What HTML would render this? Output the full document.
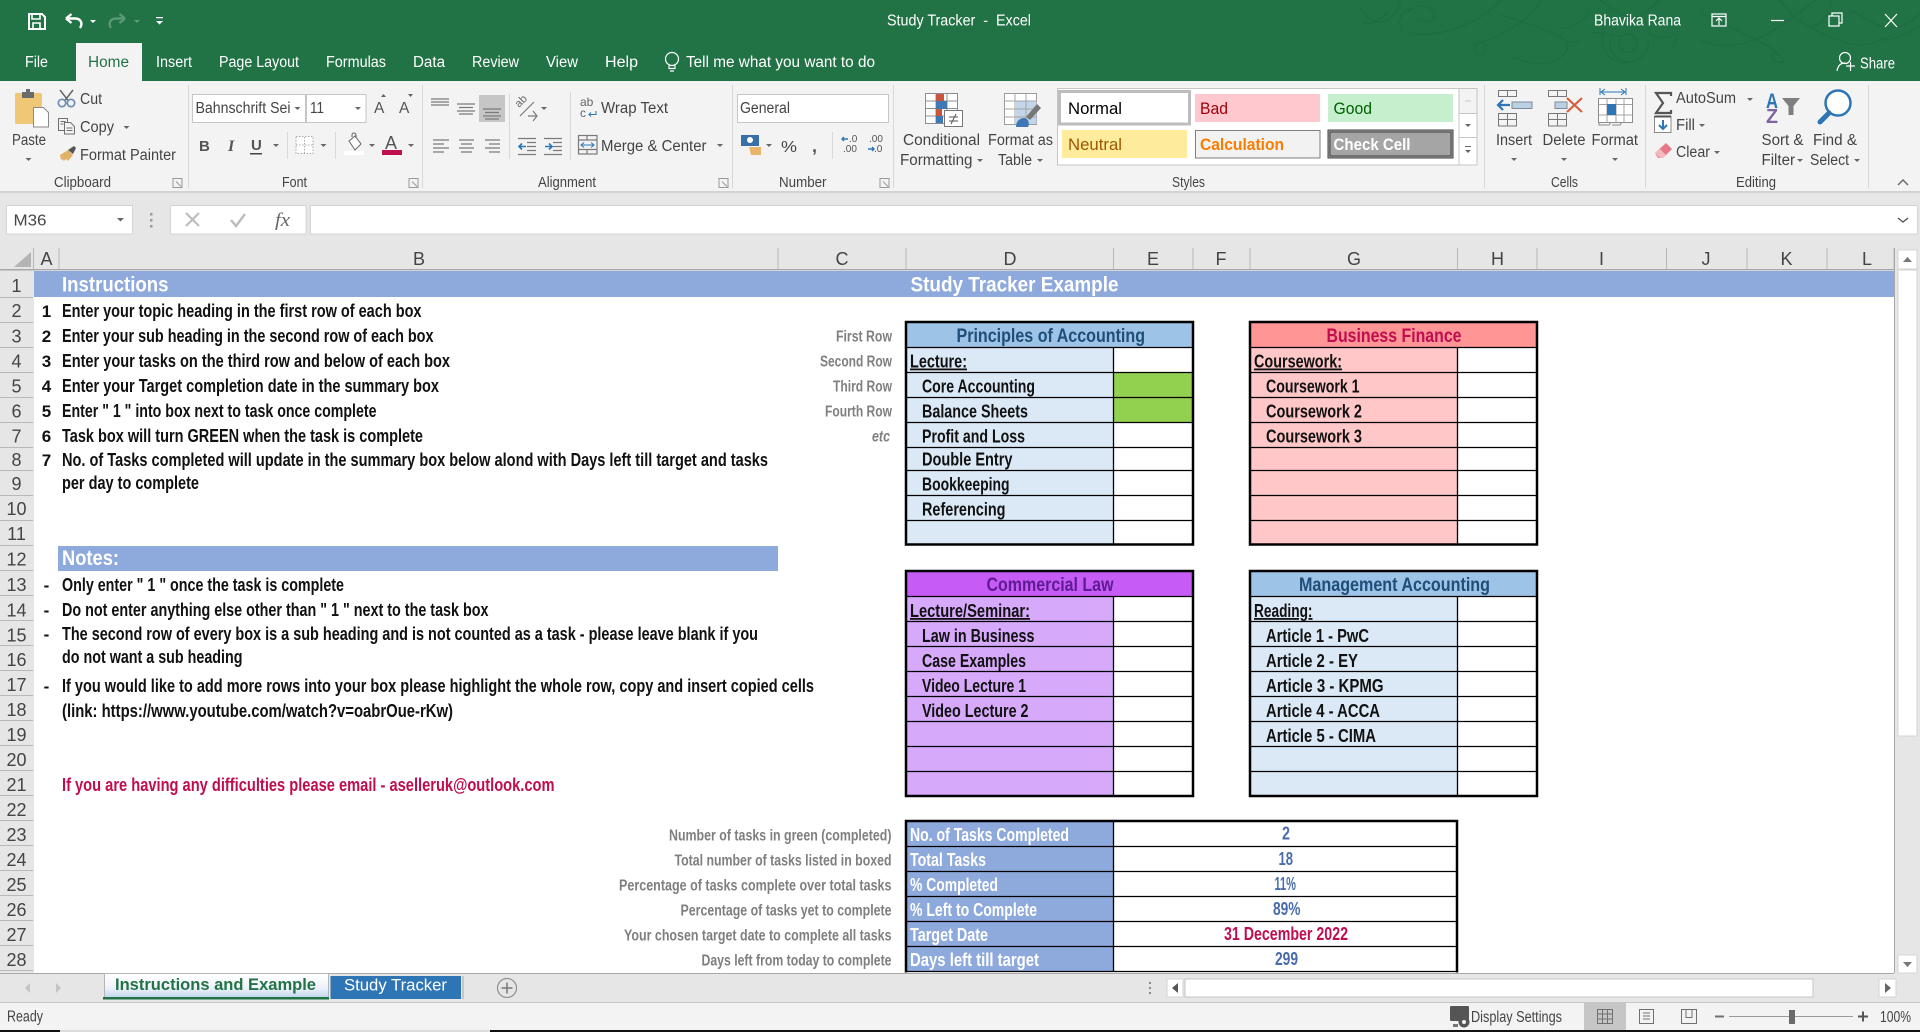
<!DOCTYPE html>
<html lang="en"><head><meta charset="utf-8"><title>Study Tracker - Excel</title>
<style>
html,body{margin:0;padding:0;width:1920px;height:1032px;overflow:hidden;background:#e6e6e6}
svg{display:block;position:absolute;left:0;top:0}
text{white-space:pre}
.u{font-family:"Liberation Sans",Arial,sans-serif;font-size:15.5px;fill:#444}
.w{fill:#fff}
.g{font-size:14.5px;fill:#444}
.h{font-family:"Liberation Sans Narrow","Liberation Sans",sans-serif;font-size:18px;fill:#444}
.s{font-family:"Liberation Sans Narrow","Liberation Sans",sans-serif;font-weight:700;font-size:18px;fill:#111}
.l{fill:#7f7f7f;font-size:16px}
.v{fill:#4a6cab;text-anchor:start}
.r{fill:#c00d50}
.o{fill:#fff}
.t{font-size:19px}
.b{fill:#1f4e79}
.p{fill:#5f1b94}
</style></head><body>
<svg width="1920" height="1032" viewBox="0 0 1920 1032">
<!-- base -->
<rect width="1920" height="1032" fill="#e6e6e6"/>
<rect width="1920" height="81" fill="#217346"/>
<g fill="none" stroke="#1e6c42" stroke-width="1.300">
<path d="M1360 8c8 12 22 20 32 8s8-12 8-16M1362 22c10 4 18-2 26-10M1410 33c28 6 66-8 92-33M1414 8c-12 2-18 12-12 22M1408 12c12-10 24-6 26 2s-10 10-16 4M1470 45c24-4 56-22 72-45M1482 40c8 10 2 16-4 14s-4-8 2-14M1500 15c30 8 60 20 66 26s-4 20-20 22-26-4-32-6M1590 10c-6 12-18 18-28 18M1580 42c-10-2-14 0-16 4"/>
<circle cx="1628" cy="43" r="9"/><path d="M1612 36c-6 14 4 26 17 26s21-12 19-22M1604 30c-6 22 8 34 24 33M1648 33c10 6 18 6 24 2s6 8 0 12M1620 36c-14 0-20-6-30-2"/>
<path d="M1700 40c22 10 50 6 80-14s30-22 36-26M1700 12c24 14 60 26 76 40s0 12-4 6 4-8 8-2M1780 0c10 16 30 30 58 40s34 2 52-4M1810 28c10-4 18-10 22-28M1850 10c14 6 28 18 40 18s20-6 30-14M1880 40c12 0 24-4 40-14M1600 0c10 8 20 16 34 18M1660 0c-8 8-16 14-26 18"/>
</g>
<!-- QAT -->
<g fill="none" stroke="#fff" stroke-width="2">
<path d="M29 14h13l3 3v12H29z"/><path d="M32 14v5h8v-5M33 29v-6h7v6" stroke-width="1.600"/>
<path d="M66 18.500l5.500-4.500M66 18.500l5.500 4.500M66 18.500h9c6 0 8 5 5 9.500" stroke-width="2.400"/>
<path d="M125 18.500l-5.500-4.500M125 18.500l-5.500 4.500M125 18.500h-9c-6 0-8 5-5 9.500" stroke="#5c9a78" stroke-width="2.200"/>
</g>
<g fill="#fff"><path d="M90 20h6l-3 3z"/><path d="M134 20h6l-3 3z" fill="#5c9a78"/><path d="M156 17h7v1.200h-7zM156 21h7l-3.500 3.500z"/></g>
<text class="u w" x="887" y="25.500" font-size="15" textLength="144" lengthAdjust="spacingAndGlyphs">Study Tracker  -  Excel</text>
<text class="u w" x="1594" y="25.500" textLength="87" lengthAdjust="spacingAndGlyphs">Bhavika Rana</text>
<g fill="none" stroke="#fff" stroke-width="1.200">
<rect x="1712" y="14" width="14" height="12"/><path d="M1712 16.500h14M1719 25v-7M1716 21l3-3 3 3"/>
<path d="M1771 20.500h13"/>
<rect x="1829" y="16" width="10" height="10"/><path d="M1832 16v-3h10v10h-3"/>
<path d="M1885 14l12 13M1897 14l-12 13"/>
<circle cx="1845" cy="58" r="5.500"/><path d="M1837 71c1-6 4-8 8-8M1846 66h9M1850.500 62v9"/>
<circle cx="672" cy="59" r="6.500"/><path d="M669 65.500v3h6v-3M670 71h4"/>
</g>
<text class="u w" x="1860" y="68.500" textLength="35" lengthAdjust="spacingAndGlyphs">Share</text>
<!-- tabs -->
<rect x="76" y="43" width="66" height="40" fill="#f3f3f3"/>
<g class="u w">
<text class="u w" x="25" y="67" textLength="23" lengthAdjust="spacingAndGlyphs">File</text>
<text class="u" x="88" y="67" style="fill:#217346" textLength="41" lengthAdjust="spacingAndGlyphs">Home</text>
<text class="u w" x="156" y="67" textLength="36" lengthAdjust="spacingAndGlyphs">Insert</text>
<text class="u w" x="219" y="67" textLength="80" lengthAdjust="spacingAndGlyphs">Page Layout</text>
<text class="u w" x="326" y="67" textLength="60" lengthAdjust="spacingAndGlyphs">Formulas</text>
<text class="u w" x="413" y="67" textLength="32" lengthAdjust="spacingAndGlyphs">Data</text>
<text class="u w" x="472" y="67" textLength="47" lengthAdjust="spacingAndGlyphs">Review</text>
<text class="u w" x="546" y="67" textLength="32" lengthAdjust="spacingAndGlyphs">View</text>
<text class="u w" x="605" y="67" textLength="33" lengthAdjust="spacingAndGlyphs">Help</text>
<text class="u w" x="686" y="67" textLength="189" lengthAdjust="spacingAndGlyphs">Tell me what you want to do</text>
</g>
<!-- ribbon -->
<rect y="81" width="1920" height="111" fill="#f3f3f3"/>
<rect x="76" y="81" width="66" height="2" fill="#f3f3f3"/>
<rect y="191" width="1920" height="2" fill="#d2d2d2"/>
<g fill="#d8d8d8"><rect x="188" y="85" width="1" height="103"/><rect x="422" y="85" width="1" height="103"/><rect x="732" y="85" width="1" height="103"/><rect x="893" y="85" width="1" height="103"/><rect x="1484" y="85" width="1" height="103"/><rect x="1645" y="85" width="1" height="103"/><rect x="1868" y="85" width="1" height="103"/><rect x="287" y="132" width="1" height="27"/><rect x="335" y="132" width="1" height="27"/><rect x="509" y="94" width="1" height="65"/><rect x="570" y="92" width="1" height="68"/><rect x="832" y="132" width="1" height="27"/></g>
<!-- clipboard -->
<rect x="15" y="93" width="27" height="31" rx="1.500" fill="#f0c677"/><rect x="22" y="92" width="12" height="6" fill="#6b6b6b"/><rect x="26" y="89" width="4" height="4" fill="#6b6b6b"/>
<path d="M33.500 107.500h10l5 5v14.500h-15z" fill="#fff" stroke="#8a8a8a"/>
<text class="u" x="12" y="145" textLength="34" lengthAdjust="spacingAndGlyphs">Paste</text>
<path d="M25.500 158h6l-3 3z" fill="#666"/>
<g fill="none" stroke="#666" stroke-width="1.500"><path d="M60 90l8.500 11M73 90l-8.500 11"/></g>
<circle cx="62" cy="103" r="3.700" fill="none" stroke="#6b8fb5" stroke-width="1.700"/><circle cx="71" cy="103" r="3.700" fill="none" stroke="#6b8fb5" stroke-width="1.700"/>
<text class="u" x="80" y="104" textLength="22" lengthAdjust="spacingAndGlyphs">Cut</text>
<g fill="#f3f3f3" stroke="#6f6f6f"><path d="M58.500 118.500h9v12h-9z"/><path d="M64.500 122.500h6l4 4v7.500h-10z"/></g><path d="M60.500 121.500h5M60.500 124h3M66.500 128h6M66.500 130.500h6" stroke="#6f6f6f"/>
<text class="u" x="80" y="132" textLength="34" lengthAdjust="spacingAndGlyphs">Copy</text><path d="M123.500 126h6l-3 3z" fill="#666"/>
<path d="M60 155l8-5 5 5-5 6-2-2-2 2-2-2-1 1z" fill="#e2b268"/><path d="M68 150l6-4 2 2-3 6z" fill="#555"/>
<text class="u" x="80" y="160" textLength="96" lengthAdjust="spacingAndGlyphs">Format Painter</text>
<text class="u g" x="54" y="187" textLength="57" lengthAdjust="spacingAndGlyphs">Clipboard</text>
<g fill="none" stroke="#999"><path d="M173 178.500h9v9h-9zM176 181.500l5 5"/><path d="M409 178.500h9v9h-9zM412 181.500l5 5"/><path d="M719 178.500h9v9h-9zM722 181.500l5 5"/><path d="M880 178.500h9v9h-9zM883 181.500l5 5"/></g>
<!-- font -->
<rect x="192.500" y="94.500" width="113" height="28" fill="#fff" stroke="#c6c6c6"/><rect x="306.500" y="94.500" width="59.500" height="28" fill="#fff" stroke="#c6c6c6"/>
<text class="u" x="195.500" y="113" textLength="95" lengthAdjust="spacingAndGlyphs">Bahnschrift Sei</text><text class="u" x="310" y="113" textLength="14" lengthAdjust="spacingAndGlyphs">11</text>
<g fill="#666"><path d="M294.500 107h6l-3 3z"/><path d="M355 107h6l-3 3z"/><path d="M273 144h6l-3 3z"/><path d="M320.500 144h6l-3 3z"/><path d="M369 144h6l-3 3z"/><path d="M408 144h6l-3 3z"/><path d="M541 107h6l-3 3z"/><path d="M766 144h6l-3 3z"/><path d="M878 107h6l-3 3z"/><path d="M1037 159h6l-3 3z"/><path d="M977 159h6l-3 3z"/><path d="M717 144h6l-3 3z"/><path d="M1511 158h6l-3 3z"/><path d="M1561 158h6l-3 3z"/><path d="M1612 158h6l-3 3z"/><path d="M1747 98h6l-3 3z"/><path d="M1699 124h6l-3 3z"/><path d="M1714 151h6l-3 3z"/><path d="M1797 159h6l-3 3z"/><path d="M1854 159h6l-3 3z"/></g>
<text class="u" x="374" y="113" font-size="17" style="fill:#555">A</text><path d="M381 97l2.500-3 2.500 3z" fill="#666"/>
<text class="u" x="399" y="113" font-size="17" style="fill:#555">A</text><path d="M408 94l2.500 3 2.500-3z" fill="#666"/>
<text x="199" y="151" font-family="Liberation Sans" font-weight="700" font-size="15" fill="#555">B</text>
<text x="228" y="151" font-family="Liberation Serif" font-style="italic" font-weight="700" font-size="16" fill="#555">I</text>
<text x="251" y="150" font-family="Liberation Sans" font-weight="700" font-size="15" fill="#555">U</text><rect x="250" y="153" width="12" height="1.500" fill="#444"/>
<rect x="296" y="136.500" width="17" height="17" fill="#fff" stroke="#aaa" stroke-dasharray="1.500 1.500"/><path d="M304.500 137v16M296 145h17" stroke="#aaa" stroke-dasharray="1.500 1.500"/>
<path d="M349 141l6-5 6 8-6 6z" fill="#fff" stroke="#666"/><path d="M352 137l0-2a2 2 0 0 1 4 0l0 3" fill="none" stroke="#666"/><rect x="344" y="151" width="20" height="4" fill="#fff"/>
<text x="385" y="149" font-family="Liberation Sans" font-size="18" fill="#555">A</text><rect x="382" y="150" width="20" height="5" fill="#c00d50"/>
<text class="u g" x="282" y="187" textLength="25" lengthAdjust="spacingAndGlyphs">Font</text>
<!-- alignment -->
<rect x="479" y="95" width="26" height="27" fill="#c6c6c6"/>
<g stroke="#7a7a7a" stroke-width="1.200" fill="none">
<path d="M431 99h18M431 102h18M431 105h18" />
<path d="M457 104h18M459 107.500h14M457 111h18M459 114h14"/>
<path d="M483 109h18M485 112.500h14M483 116h18M485 119h14"/>
<path d="M433 140h16M433 144h11M433 148h16M433 152h11"/>
<path d="M459 140h15M461 144h11M459 148h15M461 152h11"/>
<path d="M485 140h15M489 144h11M485 148h15M489 152h11"/>
<path d="M520 116l14-14M528 116h9M533 111l4 5-4 5" />
<path d="M518 138.500h18M527 142.500h9M527 146.500h9M527 150.500h9M518 154.500h18"/><path d="M544 138.500h18M553 142.500h9M553 146.500h9M553 150.500h9M544 154.500h18"/>
<rect x="578.500" y="135.500" width="18.500" height="18.500"/><path d="M578.500 140h18.500M578.500 149.500h18.500M587 135.500v4M587 150v4"/>
</g>
<text x="519" y="108" font-family="Liberation Sans" font-size="11" fill="#666" transform="rotate(-45 519 108)">ab</text>
<path d="M526 146.500h-7m3-3l-3 3 3 3" stroke="#2e75b6" stroke-width="1.600" fill="none"/><path d="M545 146.500h7m-3-3l3 3-3 3" stroke="#2e75b6" stroke-width="1.600" fill="none"/>
<path d="M581 145h13m-10-2.500l-3 2.500 3 2.500m7-5l3 2.500-3 2.500" stroke="#2e75b6" fill="none"/>
<text x="580" y="106" font-family="Liberation Sans" font-size="12" fill="#666">ab</text><text x="580" y="117" font-family="Liberation Sans" font-size="12" fill="#666">c</text><path d="M596 111v3.500h-7m2-2l-2 2 2 2" stroke="#2e75b6" fill="none"/>
<text class="u" x="601" y="113" textLength="67" lengthAdjust="spacingAndGlyphs">Wrap Text</text>
<text class="u" x="601" y="151" textLength="105.500" lengthAdjust="spacingAndGlyphs">Merge &amp; Center</text>
<text class="u g" x="538" y="187" textLength="58" lengthAdjust="spacingAndGlyphs">Alignment</text>
<!-- number -->
<rect x="737.500" y="94.500" width="151" height="28" fill="#fff" stroke="#c6c6c6"/>
<text class="u" x="740" y="113" textLength="50" lengthAdjust="spacingAndGlyphs">General</text>
<rect x="741" y="135" width="18" height="11" fill="#3a6ea8"/><circle cx="750" cy="140" r="3" fill="#fff"/><path d="M749 147h12v8h-10z" fill="#e9b56a"/>
<text class="u" x="781" y="152" font-size="18" textLength="16" lengthAdjust="spacingAndGlyphs">%</text>
<text x="812" y="152" font-family="Liberation Sans" font-weight="700" font-size="18" fill="#555">,</text>
<g font-family="Liberation Sans" font-size="10" fill="#555"><text x="849" y="142">.0</text><text x="843" y="152">.00</text><text x="869" y="142">.00</text><text x="874" y="152">.0</text></g>
<path d="M848 139h-6m2-2l-2 2 2 2M868 149h6m-2-2l2 2-2 2" stroke="#2e75b6" stroke-width="1.400" fill="none"/>
<text class="u g" x="779" y="187" textLength="47.500" lengthAdjust="spacingAndGlyphs">Number</text>
<!-- cond fmt -->
<g fill="#fff" stroke="#8c8c8c"><rect x="925.500" y="93.500" width="32" height="30"/></g>
<path d="M936 93.500v30M947 93.500v30M925.500 101h32M925.500 108.500h32M925.500 116h32" stroke="#8c8c8c" fill="none"/>
<rect x="936" y="94" width="8" height="7" fill="#c8553d"/><rect x="936" y="101" width="11" height="8" fill="#3f78b5"/><rect x="936" y="109" width="6" height="7" fill="#c8553d"/><rect x="936" y="116" width="7" height="7" fill="#3f78b5"/>
<rect x="944.500" y="110.500" width="18" height="16" fill="#fff" stroke="#777"/><path d="M949 117h9M949 121h9M956 114l-5 10" stroke="#555" fill="none"/>
<text class="u" x="903" y="145" textLength="77" lengthAdjust="spacingAndGlyphs">Conditional</text><text class="u" x="900" y="165" textLength="72.500" lengthAdjust="spacingAndGlyphs">Formatting</text>
<rect x="1004.500" y="93.500" width="32" height="31" fill="#fff" stroke="#9c9c9c"/><rect x="1016" y="101" width="20.500" height="23" fill="#c3d5e8"/><path d="M1015 93.500v31M1026 93.500v31M1004.500 101h32M1004.500 109h32M1004.500 117h32" stroke="#a5a5a5" fill="none"/>
<path d="M1026 117l11-13 4 4-11 12z" fill="#777"/><path d="M1016 127c0-6 4-9 8-9s6 5 4 9z" fill="#3f78b5"/>
<text class="u" x="988" y="145" textLength="65" lengthAdjust="spacingAndGlyphs">Format as</text><text class="u" x="998" y="165" textLength="34" lengthAdjust="spacingAndGlyphs">Table</text>
<!-- styles -->
<rect x="1057.500" y="88.500" width="419.500" height="76.500" fill="#fff" stroke="#c6c6c6"/>
<rect x="1459" y="88.500" width="18" height="25" fill="#f3f3f3" stroke="#c6c6c6"/><rect x="1459" y="113.500" width="18" height="24" fill="#fff" stroke="#c6c6c6"/><rect x="1459" y="137.500" width="18" height="27.500" fill="#fff" stroke="#c6c6c6"/>
<path d="M1465 101h6" stroke="#c9c9c9"/><path d="M1465 124h6l-3 3z" fill="#666"/><path d="M1465 146.500h6" stroke="#666"/><path d="M1465 150h6l-3 3z" fill="#666"/>
<rect x="1059.500" y="91.500" width="130" height="32.500" fill="#fff" stroke="#bdbdbd" stroke-width="3"/>
<rect x="1195" y="94" width="125" height="28" fill="#ffc7ce"/><rect x="1328" y="94" width="125" height="28" fill="#c6efce"/>
<rect x="1062" y="130" width="125" height="28" fill="#ffeb9c"/>
<rect x="1195.500" y="130.500" width="124.500" height="27.500" fill="#f2f2f2" stroke="#7f7f7f"/>
<rect x="1328" y="130" width="125" height="28" fill="#a5a5a5" stroke="#3f3f3f" stroke-width="1"/><rect x="1330" y="132" width="121" height="24" fill="none" stroke="#3f3f3f" stroke-width="1"/>
<g font-family="Liberation Sans" font-size="17">
<text x="1068" y="114" fill="#000" textLength="54" lengthAdjust="spacingAndGlyphs">Normal</text>
<text x="1200" y="114" fill="#9c0006" textLength="28" lengthAdjust="spacingAndGlyphs">Bad</text>
<text x="1333.500" y="114" fill="#006100" textLength="38.500" lengthAdjust="spacingAndGlyphs">Good</text>
<text x="1068" y="150" fill="#9c5700" textLength="54" lengthAdjust="spacingAndGlyphs">Neutral</text>
<text x="1200" y="150" fill="#fa7d00" font-weight="700" textLength="84" lengthAdjust="spacingAndGlyphs">Calculation</text>
<text x="1333.500" y="150" fill="#fff" font-weight="700" textLength="77" lengthAdjust="spacingAndGlyphs">Check Cell</text>
</g>
<text class="u g" x="1172" y="187" textLength="33" lengthAdjust="spacingAndGlyphs">Styles</text>
<!-- cells -->
<g fill="none" stroke="#777">
<path d="M1498.500 90.500h18v6h-18zM1507.500 90.500v6M1498.500 113.500h18v12.500h-18zM1498.500 119.500h18M1507.500 113.500v12.500"/>
<path d="M1548.500 90.500h18v6h-18zM1557.500 90.500v6M1548.500 113.500h18v12.500h-18zM1548.500 119.500h18M1557.500 113.500v12.500"/>
</g>
<rect x="1512" y="102" width="20" height="6.500" fill="#bcd0e5" stroke="#7f8b99"/><path d="M1510 105h-12m5-5l-5 5 5 5" stroke="#2e75b6" stroke-width="2.200" fill="none"/>
<rect x="1555" y="102" width="12" height="6.500" fill="#bcd0e5" stroke="#7f8b99"/><path d="M1567 98l15 14M1582 98l-15 14" stroke="#d2603f" stroke-width="2.200" fill="none"/>
<path d="M1601 92h24m-20-3l-4 3 4 3m16-6l4 3-4 3M1600 88v7M1626 88v7" stroke="#2e75b6" fill="none"/>
<rect x="1598.500" y="98.500" width="34" height="24" fill="#fff" stroke="#8c8c8c"/><path d="M1607 98.500v24M1616 98.500v24M1624 98.500v24M1598.500 104.500h34M1598.500 115h34" stroke="#a5a5a5" fill="none"/><rect x="1607" y="104" width="9" height="11" fill="#2e75b6"/><path d="M1599 122v3h10l2-3M1612 125h8l2-3" stroke="#8c8c8c" fill="none"/>
<text class="u" x="1496" y="145" textLength="36" lengthAdjust="spacingAndGlyphs">Insert</text><text class="u" x="1542.500" y="145" textLength="43" lengthAdjust="spacingAndGlyphs">Delete</text><text class="u" x="1591.500" y="145" textLength="46.500" lengthAdjust="spacingAndGlyphs">Format</text>
<text class="u g" x="1551" y="187" textLength="27" lengthAdjust="spacingAndGlyphs">Cells</text>
<!-- editing -->
<path d="M1671 96v-3h-15l7 10-7 10h15v-3" fill="none" stroke="#555" stroke-width="2.200"/>
<text class="u" x="1676" y="103" textLength="60" lengthAdjust="spacingAndGlyphs">AutoSum</text>
<rect x="1654.500" y="116.500" width="16.500" height="16" fill="#fff" stroke="#888"/><path d="M1654.500 116.500h16.500" stroke="#555" stroke-width="2"/><path d="M1663 120v9m-4-4l4 4 4-4" stroke="#2e75b6" stroke-width="2" fill="none"/>
<text class="u" x="1676" y="130" textLength="19" lengthAdjust="spacingAndGlyphs">Fill</text>
<path d="M1655 153l11-10 6 6-9 9h-5z" fill="#e87888"/><path d="M1655 153l5 5h3l3-3-6-6z" fill="#f2b9c1"/>
<text class="u" x="1676" y="157" textLength="34" lengthAdjust="spacingAndGlyphs">Clear</text>
<text x="1766" y="108" font-family="Liberation Sans" font-weight="700" font-size="21" fill="#2e75b6" textLength="12" lengthAdjust="spacingAndGlyphs">A</text><text x="1766" y="123" font-family="Liberation Sans" font-weight="700" font-size="20" fill="#8064a2" textLength="12" lengthAdjust="spacingAndGlyphs">Z</text>
<path d="M1782 98h18l-6.500 8v9h-5v-9z" fill="#7f7f7f"/>
<circle cx="1838" cy="103" r="12.500" fill="#fff" stroke="#2e75b6" stroke-width="2.500"/><path d="M1829 113l-9 9" stroke="#2e75b6" stroke-width="5" stroke-linecap="round"/>
<text class="u" x="1761.500" y="145" textLength="42" lengthAdjust="spacingAndGlyphs">Sort &amp;</text><text class="u" x="1761.500" y="165" textLength="33.500" lengthAdjust="spacingAndGlyphs">Filter</text>
<text class="u" x="1813" y="145" textLength="44" lengthAdjust="spacingAndGlyphs">Find &amp;</text><text class="u" x="1810" y="165" textLength="39" lengthAdjust="spacingAndGlyphs">Select</text>
<text class="u g" x="1736" y="187" textLength="40" lengthAdjust="spacingAndGlyphs">Editing</text>
<path d="M1898 185l5-5 5 5" fill="none" stroke="#666" stroke-width="1.400"/>
<!-- formula bar -->
<rect x="6.500" y="205.500" width="126" height="28.500" fill="#fff" stroke="#d4d4d4"/>
<text class="u" x="13.500" y="225.500" textLength="33" lengthAdjust="spacingAndGlyphs">M36</text><path d="M117 218h7l-3.500 3.500z" fill="#666"/>
<g fill="#9a9a9a"><rect x="150" y="213" width="2.500" height="2.500"/><rect x="150" y="219" width="2.500" height="2.500"/><rect x="150" y="225" width="2.500" height="2.500"/></g>
<rect x="170.500" y="205.500" width="135.500" height="28.500" fill="#fff" stroke="#d4d4d4"/><rect x="310.500" y="205.500" width="1607" height="28.500" fill="#fff" stroke="#d4d4d4"/>
<path d="M186 213l13 13M199 213l-13 13" stroke="#bdbdbd" stroke-width="2.200"/><path d="M231 220l5 6 9-12" stroke="#bdbdbd" stroke-width="2.500" fill="none"/>
<text x="275" y="226" font-family="Liberation Serif" font-style="italic" font-size="19" fill="#666" textLength="15" lengthAdjust="spacingAndGlyphs">fx</text>
<path d="M1898 218l5 4 5-4" fill="none" stroke="#555" stroke-width="1.400"/>
<!-- headers -->
<rect y="248" width="1895" height="22" fill="#e6e6e6"/><rect y="270" width="33.500" height="703" fill="#e6e6e6"/>
<rect x="34" y="270" width="1860" height="703" fill="#fff"/>
<path d="M14 267l17-15v15z" fill="#b4b4b4"/>
<g stroke="#b8b8b8"><path d="M33.500 248v22M59 248v22M778 248v22M906 248v22M1113.500 248v22M1193 248v22M1250 248v22M1457.500 248v22M1537 248v22M1666.500 248v22M1747 248v22M1827 248v22M1894 248v22"/>
<path d="M0 297.500h33M0 322.500h33M0 347.500h33M0 372.500h33M0 397.500h33M0 422.500h33M0 447.500h33M0 470.500h33M0 495.500h33M0 520.500h33M0 545.500h33M0 570.500h33M0 595.500h33M0 620.500h33M0 645.500h33M0 670.500h33M0 695.500h33M0 720.500h33M0 745.500h33M0 770.500h33M0 795.500h33M0 820.500h33M0 845.500h33M0 870.500h33M0 895.500h33M0 920.500h33M0 945.500h33M0 970.500h33"/></g>
<rect y="269" width="1895" height="1.500" fill="#a8a8a8"/>
<g class="h" text-anchor="middle"><text x="46.500" y="265">A</text><text x="419" y="265">B</text><text x="842" y="265">C</text><text x="1010" y="265">D</text><text x="1153" y="265">E</text><text x="1221" y="265">F</text><text x="1354" y="265">G</text><text x="1497.500" y="265">H</text><text x="1601.500" y="265">I</text><text x="1706" y="265">J</text><text x="1786.500" y="265">K</text><text x="1867" y="265">L</text></g>
<g class="h" text-anchor="middle" style="font-size:18px"><text x="16.500" y="292">1</text><text x="16.500" y="317">2</text><text x="16.500" y="342.500">3</text><text x="16.500" y="367.500">4</text><text x="16.500" y="392.500">5</text><text x="16.500" y="417.500">6</text><text x="16.500" y="442.500">7</text><text x="16.500" y="466">8</text><text x="16.500" y="490">9</text><text x="16.500" y="515">10</text><text x="16.500" y="540">11</text><text x="16.500" y="565.500">12</text><text x="16.500" y="591">13</text><text x="16.500" y="616.500">14</text><text x="16.500" y="641.500">15</text><text x="16.500" y="666">16</text><text x="16.500" y="691">17</text><text x="16.500" y="716">18</text><text x="16.500" y="741">19</text><text x="16.500" y="766">20</text><text x="16.500" y="791">21</text><text x="16.500" y="816">22</text><text x="16.500" y="841">23</text><text x="16.500" y="866">24</text><text x="16.500" y="891">25</text><text x="16.500" y="916">26</text><text x="16.500" y="941">27</text><text x="16.500" y="966">28</text></g>
<!-- sheet banners -->
<rect x="34" y="271" width="1860" height="26" fill="#8ea9db"/>
<rect x="58" y="546" width="720" height="25" fill="#8ea9db"/>
<g class="s">
<text class="s o t" x="62" y="291.500" style="font-size:21px" textLength="106.500" lengthAdjust="spacingAndGlyphs">Instructions</text>
<text class="s o t" x="910.500" y="291.500" style="font-size:21px" textLength="208" lengthAdjust="spacingAndGlyphs">Study Tracker Example</text>
<text class="s o t" x="62" y="565" style="font-size:21px" textLength="57" lengthAdjust="spacingAndGlyphs">Notes:</text>
<g text-anchor="middle" style="font-size:17px"><text x="46.500" y="317">1</text><text x="46.500" y="342">2</text><text x="46.500" y="367">3</text><text x="46.500" y="392">4</text><text x="46.500" y="417">5</text><text x="46.500" y="442">6</text><text x="46.500" y="466">7</text><text x="46.500" y="591">-</text><text x="46.500" y="616">-</text><text x="46.500" y="640">-</text><text x="46.500" y="692">-</text></g>
<text class="s" x="62" y="317" textLength="359.500" lengthAdjust="spacingAndGlyphs">Enter your topic heading in the first row of each box</text>
<text class="s" x="62" y="342" textLength="371.500" lengthAdjust="spacingAndGlyphs">Enter your sub heading in the second row of each box</text>
<text class="s" x="62" y="367" textLength="388" lengthAdjust="spacingAndGlyphs">Enter your tasks on the third row and below of each box</text>
<text class="s" x="62" y="392" textLength="377" lengthAdjust="spacingAndGlyphs">Enter your Target completion date in the summary box</text>
<text class="s" x="62" y="417" textLength="314.500" lengthAdjust="spacingAndGlyphs">Enter " 1 " into box next to task once complete</text>
<text class="s" x="62" y="442" textLength="361" lengthAdjust="spacingAndGlyphs">Task box will turn GREEN when the task is complete</text>
<text class="s" x="62" y="466" textLength="706" lengthAdjust="spacingAndGlyphs">No. of Tasks completed will update in the summary box below alond with Days left till target and tasks</text>
<text class="s" x="62" y="489" textLength="137" lengthAdjust="spacingAndGlyphs">per day to complete</text>
<text class="s" x="62" y="591" textLength="282" lengthAdjust="spacingAndGlyphs">Only enter " 1 " once the task is complete</text>
<text class="s" x="62" y="616" textLength="426.500" lengthAdjust="spacingAndGlyphs">Do not enter anything else other than " 1 " next to the task box</text>
<text class="s" x="62" y="640" textLength="696" lengthAdjust="spacingAndGlyphs">The second row of every box is a sub heading and is not counted as a task - please leave blank if you</text>
<text class="s" x="62" y="663" textLength="180.500" lengthAdjust="spacingAndGlyphs">do not want a sub heading</text>
<text class="s" x="62" y="692" textLength="752" lengthAdjust="spacingAndGlyphs">If you would like to add more rows into your box please highlight the whole row, copy and insert copied cells</text>
<text class="s" x="62" y="717" textLength="391" lengthAdjust="spacingAndGlyphs">(link: https://www.youtube.com/watch?v=oabrOue-rKw)</text>
<text class="s r" x="62" y="791" textLength="492.500" lengthAdjust="spacingAndGlyphs">If you are having any difficulties please email - aselleruk@outlook.com</text>
<g class="l" font-size="16">
<text class="s l" x="836" y="341.500" textLength="56" lengthAdjust="spacingAndGlyphs">First Row</text>
<text class="s l" x="820" y="366.500" textLength="72" lengthAdjust="spacingAndGlyphs">Second Row</text>
<text class="s l" x="833" y="391.500" textLength="59" lengthAdjust="spacingAndGlyphs">Third Row</text>
<text class="s l" x="825" y="416.500" textLength="67" lengthAdjust="spacingAndGlyphs">Fourth Row</text>
<text class="s l" x="872" y="441.500" font-style="italic" textLength="18" lengthAdjust="spacingAndGlyphs">etc</text>
<text class="s l" x="669" y="840.500" textLength="222.500" lengthAdjust="spacingAndGlyphs">Number of tasks in green (completed)</text>
<text class="s l" x="674.500" y="865.500" textLength="217" lengthAdjust="spacingAndGlyphs">Total number of tasks listed in boxed</text>
<text class="s l" x="619" y="890.500" textLength="272.500" lengthAdjust="spacingAndGlyphs">Percentage of tasks complete over total tasks</text>
<text class="s l" x="680.500" y="915.500" textLength="211" lengthAdjust="spacingAndGlyphs">Percentage of tasks yet to complete</text>
<text class="s l" x="624" y="940.500" textLength="267.500" lengthAdjust="spacingAndGlyphs">Your chosen target date to complete all tasks</text>
<text class="s l" x="701.500" y="965.500" textLength="190" lengthAdjust="spacingAndGlyphs">Days left from today to complete</text>
</g>
</g>
<!-- box fills -->
<rect x="906" y="322" width="287" height="25" fill="#9dc3e6"/><rect x="906" y="347" width="207" height="198" fill="#dbe9f6"/><rect x="1113" y="372" width="80" height="50" fill="#92d050"/>
<rect x="1250" y="322" width="287" height="25" fill="#ff9595"/><rect x="1250" y="347" width="207" height="198" fill="#ffc7c7"/>
<rect x="906" y="571" width="287" height="25" fill="#c65cf5"/><rect x="906" y="596" width="207" height="200" fill="#d6a9fb"/>
<rect x="1250" y="571" width="287" height="25" fill="#9dc3e6"/><rect x="1250" y="596" width="207" height="200" fill="#dbe9f6"/>
<rect x="906" y="821" width="207" height="151" fill="#8ea9db"/>
<g fill="none" stroke="#000" stroke-width="1.300">
<path d="M906 347.500h287M906 372.500h287M906 397.500h287M906 422.500h287M906 447.500h287M906 470.500h287M906 495.500h287M906 520.500h287M1113.500 347v198"/>
<path d="M1250 347.500h287M1250 372.500h287M1250 397.500h287M1250 422.500h287M1250 447.500h287M1250 470.500h287M1250 495.500h287M1250 520.500h287M1457.500 347v198"/>
<path d="M906 596.500h287M906 621.500h287M906 646.500h287M906 671.500h287M906 696.500h287M906 721.500h287M906 746.500h287M906 771.500h287M1113.500 596v200"/>
<path d="M1250 596.500h287M1250 621.500h287M1250 646.500h287M1250 671.500h287M1250 696.500h287M1250 721.500h287M1250 746.500h287M1250 771.500h287M1457.500 596v200"/>
<path d="M906 846.500h551M906 871.500h551M906 896.500h551M906 921.500h551M906 946.500h551M906 971.500h551M1113.500 821v151"/>
</g>
<g fill="none" stroke="#000" stroke-width="2.500">
<rect x="906" y="322" width="287" height="222.500"/><rect x="1250" y="322" width="287" height="222.500"/><rect x="906" y="571" width="287" height="225"/><rect x="1250" y="571" width="287" height="225"/>
<path d="M906 972.500V821h551v151.500"/>
</g>
<!-- box text -->
<g class="s">
<text class="s t b" x="956.500" y="342" textLength="188.500" lengthAdjust="spacingAndGlyphs">Principles of Accounting</text>
<text class="s t r" x="1326.500" y="342" textLength="135" lengthAdjust="spacingAndGlyphs">Business Finance</text>
<text class="s t p" x="986.500" y="591" textLength="127" lengthAdjust="spacingAndGlyphs">Commercial Law</text>
<text class="s t b" x="1299" y="591" textLength="191" lengthAdjust="spacingAndGlyphs">Management Accounting</text>
<text class="s" x="910" y="367.500" text-decoration="underline" textLength="57" lengthAdjust="spacingAndGlyphs">Lecture:</text>
<text class="s" x="922" y="392.500" textLength="113" lengthAdjust="spacingAndGlyphs">Core Accounting</text>
<text class="s" x="922" y="417.500" textLength="106" lengthAdjust="spacingAndGlyphs">Balance Sheets</text>
<text class="s" x="922" y="442.500" textLength="103" lengthAdjust="spacingAndGlyphs">Profit and Loss</text>
<text class="s" x="922" y="465.500" textLength="90.500" lengthAdjust="spacingAndGlyphs">Double Entry</text>
<text class="s" x="922" y="490.500" textLength="87.500" lengthAdjust="spacingAndGlyphs">Bookkeeping</text>
<text class="s" x="922" y="515.500" textLength="83.500" lengthAdjust="spacingAndGlyphs">Referencing</text>
<text class="s" x="1254" y="367.500" text-decoration="underline" textLength="88" lengthAdjust="spacingAndGlyphs">Coursework:</text>
<text class="s" x="1266" y="392.500" textLength="93.500" lengthAdjust="spacingAndGlyphs">Coursework 1</text>
<text class="s" x="1266" y="417.500" textLength="96" lengthAdjust="spacingAndGlyphs">Coursework 2</text>
<text class="s" x="1266" y="442.500" textLength="96" lengthAdjust="spacingAndGlyphs">Coursework 3</text>
<text class="s" x="910" y="617" text-decoration="underline" textLength="120" lengthAdjust="spacingAndGlyphs">Lecture/Seminar:</text>
<text class="s" x="922" y="642" textLength="112.500" lengthAdjust="spacingAndGlyphs">Law in Business</text>
<text class="s" x="922" y="667" textLength="104" lengthAdjust="spacingAndGlyphs">Case Examples</text>
<text class="s" x="922" y="692" textLength="104" lengthAdjust="spacingAndGlyphs">Video Lecture 1</text>
<text class="s" x="922" y="717" textLength="106.500" lengthAdjust="spacingAndGlyphs">Video Lecture 2</text>
<text class="s" x="1254" y="617" text-decoration="underline" textLength="58.500" lengthAdjust="spacingAndGlyphs">Reading:</text>
<text class="s" x="1266" y="642" textLength="103" lengthAdjust="spacingAndGlyphs">Article 1 - PwC</text>
<text class="s" x="1266" y="667" textLength="92" lengthAdjust="spacingAndGlyphs">Article 2 - EY</text>
<text class="s" x="1266" y="692" textLength="117.500" lengthAdjust="spacingAndGlyphs">Article 3 - KPMG</text>
<text class="s" x="1266" y="717" textLength="114" lengthAdjust="spacingAndGlyphs">Article 4 - ACCA</text>
<text class="s" x="1266" y="742" textLength="110" lengthAdjust="spacingAndGlyphs">Article 5 - CIMA</text>
<text class="s o" x="910" y="841" textLength="159" lengthAdjust="spacingAndGlyphs">No. of Tasks Completed</text>
<text class="s o" x="910" y="866" textLength="76" lengthAdjust="spacingAndGlyphs">Total Tasks</text>
<text class="s o" x="910" y="891" textLength="88" lengthAdjust="spacingAndGlyphs">% Completed</text>
<text class="s o" x="910" y="916" textLength="127" lengthAdjust="spacingAndGlyphs">% Left to Complete</text>
<text class="s o" x="910" y="941" textLength="78" lengthAdjust="spacingAndGlyphs">Target Date</text>
<text class="s o" x="910" y="966" textLength="129" lengthAdjust="spacingAndGlyphs">Days left till target</text>
<text class="s v" x="1282" y="839.500" textLength="8" lengthAdjust="spacingAndGlyphs">2</text>
<text class="s v" x="1278.500" y="865" textLength="14.500" lengthAdjust="spacingAndGlyphs">18</text>
<text class="s v" x="1274.500" y="890" textLength="21.500" lengthAdjust="spacingAndGlyphs">11%</text>
<text class="s v" x="1273" y="915" textLength="27.500" lengthAdjust="spacingAndGlyphs">89%</text>
<text class="s r" x="1224" y="940" textLength="124" lengthAdjust="spacingAndGlyphs">31 December 2022</text>
<text class="s v" x="1275" y="965" textLength="23" lengthAdjust="spacingAndGlyphs">299</text>
</g>
<!-- scrollbars -->
<path d="M34 973.500h1860M1894.500 248v725" stroke="#a8a8a8" fill="none"/>
<rect x="1895" y="248" width="25" height="726" fill="#e6e6e6"/>
<rect x="1898" y="250" width="19" height="19" fill="#fff" stroke="#d4d4d4"/><path d="M1903 262l4.500-5 4.500 5z" fill="#777"/>
<rect x="1898" y="270" width="19" height="466" fill="#fff" stroke="#d4d4d4"/>
<rect x="1898" y="955" width="19" height="18" fill="#fff" stroke="#d4d4d4"/><path d="M1903 962l4.500 5 4.500-5z" fill="#777"/>
<rect y="974" width="1920" height="29" fill="#e6e6e6"/>
<path d="M0 973.500h104" stroke="#a8a8a8"/>
<path d="M30 983l-5 5 5 5zM56 983l5 5-5 5z" fill="#c4c4c4"/>
<rect x="104.500" y="973.500" width="224" height="25.500" fill="#fff" stroke="#b5b5b5"/>
<defs><linearGradient id="tb" x1="0" y1="0" x2="0" y2="1"><stop offset="0" stop-color="#fff"/><stop offset=".6" stop-color="#eef3fa"/><stop offset="1" stop-color="#c5d7ee"/></linearGradient></defs>
<rect x="105" y="974" width="223" height="23" fill="url(#tb)"/>
<rect x="103" y="997" width="226" height="2.500" fill="#217346"/>
<text x="115" y="990" font-family="Liberation Sans" font-weight="700" font-size="17" fill="#217346" textLength="201" lengthAdjust="spacingAndGlyphs">Instructions and Example</text>
<rect x="330.500" y="976" width="130.500" height="23" fill="#2e75b6"/>
<path d="M463 976v23" stroke="#a8a8a8"/>
<text x="344" y="990.500" font-family="Liberation Sans" font-size="17" fill="#fff" textLength="103" lengthAdjust="spacingAndGlyphs">Study Tracker</text>
<circle cx="507" cy="988" r="9.500" fill="none" stroke="#8f8f8f" stroke-width="1.200"/><path d="M501.500 988h11M507 982.500v11" stroke="#777" stroke-width="1.500"/>
<g fill="#8a8a8a"><rect x="1149" y="982" width="2" height="2"/><rect x="1149" y="987" width="2" height="2"/><rect x="1149" y="992" width="2" height="2"/></g>
<rect x="1167" y="979" width="16" height="18" fill="#fff" stroke="#d4d4d4"/><path d="M1178 983l-6 5 6 5z" fill="#555"/>
<rect x="1185" y="979" width="628" height="18" fill="#fff" stroke="#c6c6c6"/>
<rect x="1879" y="979" width="17" height="18" fill="#fff" stroke="#d4d4d4"/><path d="M1885 983l6 5-6 5z" fill="#666"/>
<path d="M0 1002.500h1920" stroke="#c6c6c6"/>
<!-- status -->
<rect y="1003" width="1920" height="27" fill="#f3f3f3"/>
<text class="u" x="7" y="1021.500" font-size="14.500" textLength="36" lengthAdjust="spacingAndGlyphs">Ready</text>
<rect x="1450" y="1006" width="19" height="15" rx="1" fill="#555"/><circle cx="1464" cy="1022" r="5.500" fill="#555"/><circle cx="1464" cy="1022" r="2" fill="#f3f3f3"/><path d="M1453 1024h5v3h-5z" fill="#777"/>
<text class="u" x="1471" y="1022" font-size="14.500" textLength="91" lengthAdjust="spacingAndGlyphs">Display Settings</text>
<rect x="1584" y="1003" width="42" height="27" fill="#c6c6c6"/>
<g fill="none" stroke="#707070"><rect x="1597.500" y="1009.500" width="15" height="14"/><path d="M1602.500 1009.500v14M1607.500 1009.500v14M1597.500 1014h15M1597.500 1019h15"/>
<rect x="1639.500" y="1009.500" width="14" height="14"/><path d="M1643 1013h7M1643 1016h7M1643 1019h7"/>
<rect x="1681.500" y="1009.500" width="15" height="14"/><path d="M1686 1009.500v8h6v-8"/></g>
<rect x="1715" y="1015.500" width="9" height="2" fill="#707070"/><rect x="1729" y="1016" width="124" height="1" fill="#9a9a9a"/><rect x="1789" y="1010" width="6" height="14" fill="#6a6a6a"/>
<path d="M1858 1016.500h10M1863 1011.500v10" stroke="#555" stroke-width="2"/>
<text class="u" x="1880" y="1022" font-size="14" textLength="31" lengthAdjust="spacingAndGlyphs">100%</text>
<rect y="1030" width="1920" height="2" fill="#111"/><rect x="60" y="1030" width="430" height="2" fill="#dcdcdc"/>
</svg>
</body></html>
